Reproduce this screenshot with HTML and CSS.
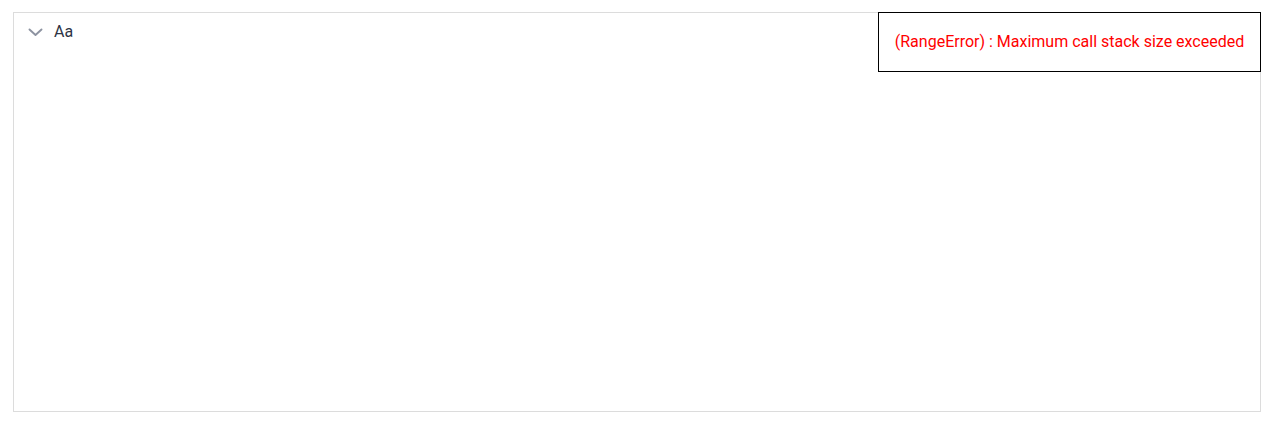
FILE: index.html
```html
<!DOCTYPE html>
<html>
<head>
<meta charset="utf-8">
<link rel="stylesheet" href="styles.css">
</head>
<body>
<div class="panel">
  <div class="panel-header">
    <svg class="chevron" width="15" height="9" viewBox="0 0 15 9"><path d="M1.5 1.5 L7.5 7 L13.5 1.5" fill="none" stroke="#8d93a1" stroke-width="1.9" stroke-linecap="round" stroke-linejoin="round"/></svg>
    <span class="label">Aa</span>
  </div>
</div>
<div class="error">(RangeError) : Maximum call stack size exceeded</div>
</body>
</html>
```
FILE: styles.css
```css
html, body { margin: 0; padding: 0; background: #fff; }
body { font-family: Roboto, "Liberation Sans", sans-serif; position: relative; }
.panel {
  margin: 12px 13px 0 13px;
  height: 400px;
  box-sizing: border-box;
  border: 1px solid #dcdcdc;
}
.panel-header {
  display: flex;
  align-items: center;
  gap: 11px;
  padding: 8px 0 0 14px;
  height: 20px;
}
.chevron { display: block; margin-top: 3px; }
.label { font-size: 16px; color: #2e3445; }
.error {
  position: absolute;
  top: 12px;
  right: 13px;
  width: 383px;
  height: 60px;
  box-sizing: border-box;
  border: 1px solid #000;
  background: #fff;
  color: #ff0000;
  font-size: 16px;
  display: flex;
  align-items: center;
  justify-content: center;
  padding-bottom: 1px;
}
```
